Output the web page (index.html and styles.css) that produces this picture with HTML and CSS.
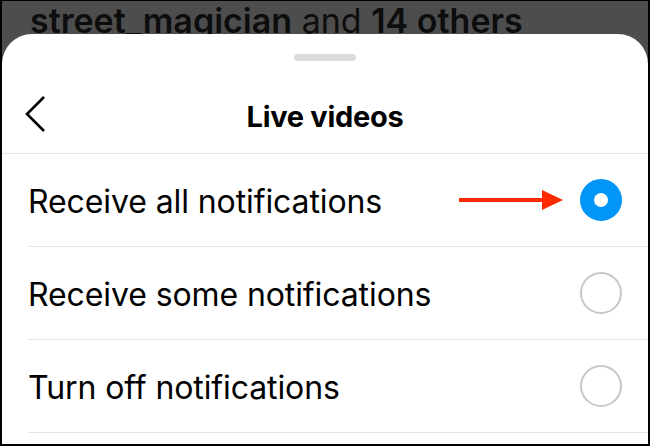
FILE: index.html
```html
<!DOCTYPE html>
<html lang="en">
  <head>
    <meta charset="UTF-8" />
    <meta name="viewport" content="width=device-width, initial-scale=1.0" />
    <title>Live videos</title>
    <link rel="stylesheet" href="styles.css">
  </head>
  <body>
    <div class="screen">
      <!-- Dimmed content behind the sheet -->
      <div class="behind">
        <span class="strong">street_magician</span> and <span class="strong">14 others</span>
      </div>

      <div class="sheet">
        <div class="handle"></div>

        <div class="header">
          <div class="back">
            <svg width="22" height="36" viewBox="0 0 22 36">
              <path d="M19 1 L2 18 L19 35" fill="none" stroke="#000" stroke-width="2.6" />
            </svg>
          </div>
          <div class="title">Live videos</div>
          <div class="spacer"></div>
        </div>

        <div class="option">
          <div class="label">Receive all notifications</div>
          <svg class="pointer" width="104" height="20" viewBox="0 0 104 20">
            <rect x="0" y="8" width="86" height="4" fill="#ff2a00" />
            <polygon points="83,0 104,10 83,20" fill="#ff2a00" />
          </svg>
          <div class="radio selected"></div>
        </div>
        <div class="option">
          <div class="label">Receive some notifications</div>
          <div class="radio"></div>
        </div>
        <div class="option">
          <div class="label">Turn off notifications</div>
          <div class="radio"></div>
        </div>
      </div>
    </div>
  </body>
</html>
```

FILE: styles.css
```css
body {
  margin: 0;
  font-family: Inter, "Noto Sans", sans-serif;
  color: #000;
}
.screen {
  width: 650px;
  height: 446px;
  box-sizing: border-box;
  border: 2px solid #000;
  border-top-width: 1px;
  background: #4d4d4d;
  display: flex;
  flex-direction: column;
  overflow: hidden;
}
.behind {
  height: 33px;
  box-sizing: border-box;
  flex-shrink: 0;
  overflow: hidden;
  padding: 3px 0 0 28px;
  font-size: 34px;
  line-height: 34px;
  color: #0d0d0d;
  white-space: nowrap;
}
.strong {
  font-weight: 600;
}
.sheet {
  flex: 1;
  background: #fff;
  border-radius: 30px 30px 0 0;
  display: flex;
  flex-direction: column;
}
.handle {
  width: 62px;
  height: 7px;
  border-radius: 4px;
  background: #dbdbdb;
  margin: 20px auto 0;
}
.header {
  display: flex;
  align-items: center;
  height: 93px;
  box-sizing: border-box;
  padding-top: 14px;
  border-bottom: 1px solid #e3e3e3;
}
.back,
.spacer {
  width: 45px;
  padding-left: 23px;
  box-sizing: border-box;
  display: flex;
}
.title {
  flex: 1;
  text-align: center;
  font-size: 29px;
  font-weight: 700;
  letter-spacing: -0.3px;
  padding-top: 4px;
}
.option {
  display: flex;
  align-items: center;
  height: 93px;
  box-sizing: border-box;
  margin-left: 26px;
  padding-right: 26px;
  border-bottom: 1px solid #e3e3e3;
}
.label {
  font-size: 32px;
  flex: 1;
  letter-spacing: -0.1px;
  padding-top: 3px;
}
.pointer {
  margin-right: 17px;
}
.radio {
  width: 42px;
  height: 42px;
  box-sizing: border-box;
  border-radius: 50%;
  border: 2px solid #c7c7c7;
}
.radio.selected {
  border: 14px solid #0095f6;
  background: #fff;
}
```
